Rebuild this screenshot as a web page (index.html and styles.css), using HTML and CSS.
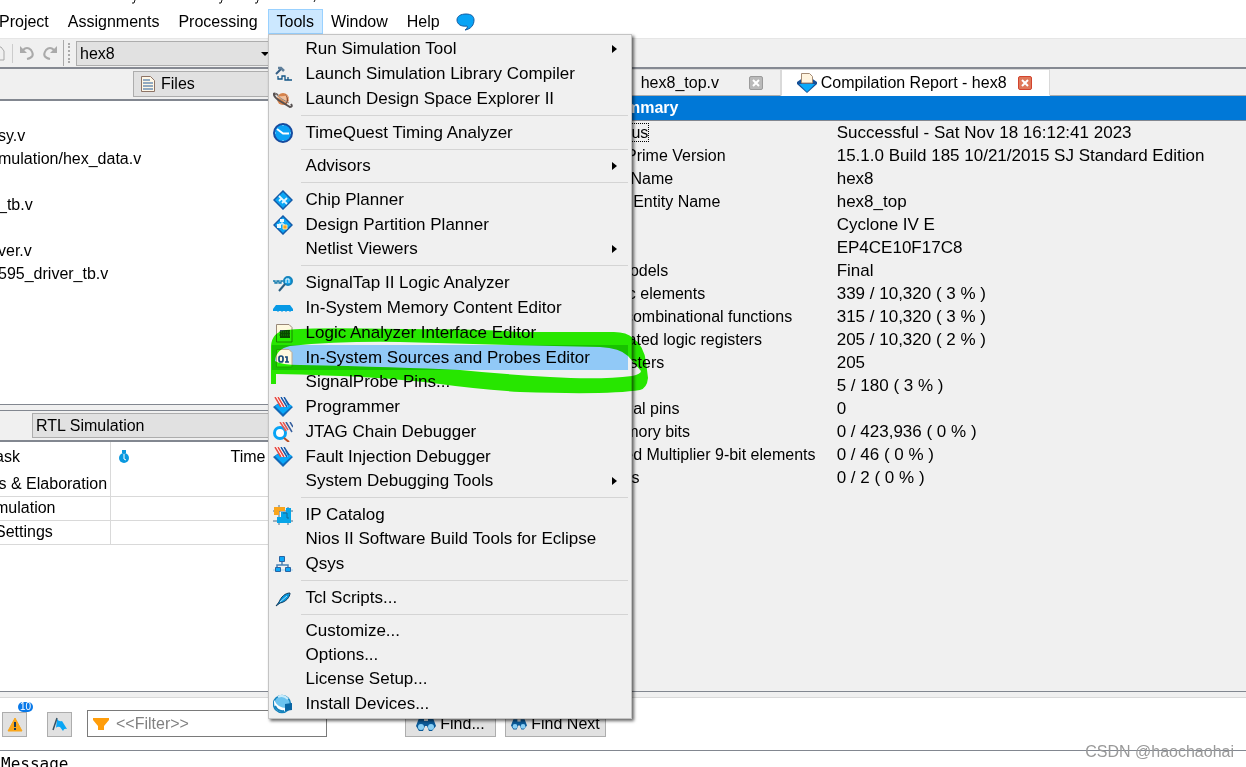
FILE: index.html
```html
<!DOCTYPE html>
<html lang="en">
<head>
    <meta charset="UTF-8">
    <meta name="viewport" content="width=device-width, initial-scale=1.0">
    <title>Quartus Prime - hex8</title>
    <link rel="stylesheet" href="styles.css">
</head>
<body>
    <svg class="title-strip" width="320" height="4" aria-hidden="true">
        <path d="M135 0l-1 3h-2M222 0l-1 3h-2M258 0l-1 3h-2M315 0l-1 2" fill="none" stroke="#111"/>
    </svg>

    <nav class="menubar">
        <button>Project</button>
        <button>Assignments</button>
        <button>Processing</button>
        <div class="menu-holder">
            <button class="open">Tools</button>
            <ul class="dropdown">
                <li><button class="sub">Run Simulation Tool</button></li>
                <li><button class="has-icon"><svg viewBox="0 0 20 20"><path d="M3 10L8 5" fill="none" stroke="#345d83" stroke-width="2"/><path d="M5 4h3l3 3" fill="none" stroke="#5f7f9b" stroke-width="2.500"/><path d="M5 12v3h4v-3h3v4h3v-3h0M12 16h3v-3M15 16h4" fill="none" stroke="#125587" stroke-width="1.300"/></svg>Launch Simulation Library Compiler</button></li>
                <li><button class="has-icon"><svg viewBox="0 0 20 20"><circle cx="10" cy="10" r="6" fill="#d7834b"/><path d="M5 7q5 1 9-1l2 4-3 4q-5-5-9-5z" fill="#f2c09b"/><path d="M12 5q5 4 2 9l-3 2q5-5 1-11" fill="#8b4c31"/><path d="M5 6Q0 3 1 6q1 3 6 6t10 6q3 0 1-3" fill="none" stroke="#575151" stroke-width="2"/><path d="M2 4q5 6 14 10" stroke="#8d8580" fill="none"/></svg>Launch Design Space Explorer II</button></li>
                <li class="line"></li>
                <li><button class="has-icon"><svg viewBox="0 0 20 20"><circle cx="10" cy="10" r="9" fill="#0ba1f5" stroke="#164a9e" stroke-width="2"/><path d="M4 6l6 4.500h6" fill="none" stroke="#fff" stroke-width="2"/><path d="M10 2v1M10 17v1M2 10h1M17 10h1" stroke="#a6e0ff"/></svg>TimeQuest Timing Analyzer</button></li>
                <li class="line"></li>
                <li><button class="sub">Advisors</button></li>
                <li class="line"></li>
                <li><button class="has-icon"><svg viewBox="0 0 20 20"><path d="M10 1l9 9-9 9-9-9z" fill="#0ba6f5" stroke="#145ba9" stroke-width="1.500"/><path d="M6 6l8 8M6 11l3-3M9 13l5-5" stroke="#e3f7ff" stroke-width="1.800"/></svg>Chip Planner</button></li>
                <li><button class="has-icon"><svg viewBox="0 0 20 20"><path d="M10 1l9 9-9 9-9-9z" fill="#0ba6f5" stroke="#145ba9" stroke-width="1.500"/><path d="M9 5v4M6 11V9h5v3" fill="none" stroke="#fff"/><path d="M7 4h4v3H7zM4 9h4v4H4z" fill="#e3f7ff"/><path d="M10 10h4v4h-4z" fill="#fba51a" stroke="#ffe0a0"/></svg>Design Partition Planner</button></li>
                <li><button class="sub">Netlist Viewers</button></li>
                <li class="line"></li>
                <li><button class="has-icon"><svg viewBox="0 0 20 20"><circle cx="15" cy="8" r="4" fill="#14a7ed" stroke="#1684bd" stroke-width="2"/><path d="M13 10V6h3v4" fill="none" stroke="#fff"/><path d="M12 11l-6 7" stroke="#285d80" stroke-width="2"/><path d="M0 8h2v2h2V8h2v2h2V8h2" fill="none" stroke="#147bae" stroke-width="1.300"/></svg>SignalTap II Logic Analyzer</button></li>
                <li><button class="has-icon"><svg viewBox="0 0 20 20"><path d="M3 7h14l3 4v2h-2l-1 1-1-1h-2l-1 1-1-1h-2l-1 1-1-1H6l-1 1-1-1H0v-2z" fill="#0799e5"/></svg>In-System Memory Content Editor</button></li>
                <li><button class="has-icon"><svg viewBox="0 0 20 20"><path d="M3.500 1.500H16l3 3V19H3.500z" fill="#fff9df" stroke="#998879"/><path d="M7 7h10v8H7z" fill="#304c57"/><path d="M6 9h12M6 12h12" stroke="#71918a" stroke-dasharray="1 1"/></svg>Logic Analyzer Interface Editor</button></li>
                <li><button class="has-icon selected"><svg viewBox="0 0 20 20"><path d="M3.500 1.500H16l3 3V19H3.500z" fill="#fff9df" stroke="#c1aa90"/><rect x="6" y="8" width="4" height="6" rx="2" fill="none" stroke="#174a79" stroke-width="1.700"/><path d="M12 9h2v5M12 14h4" fill="none" stroke="#174a79" stroke-width="1.700"/></svg>In-System Sources and Probes Editor</button></li>
                <li><button>SignalProbe Pins...</button></li>
                <li><button class="has-icon"><svg viewBox="0 0 20 20"><path d="M0 10l10-7 10 7-10 10z" fill="#1268b6"/><path d="M2 9l9-6 8 6-9 8z" fill="#08a9fa"/><path d="M2 0l6 10h7L10 0z" fill="#fff"/><path d="M2 0l6 10M5 0l6 10" stroke="#e74b43" stroke-width="1.500"/><path d="M8 0l6 10M11 0l5 8" stroke="#1757a6" stroke-width="1.500"/></svg>Programmer</button></li>
                <li><button class="has-icon"><svg viewBox="0 0 20 20"><circle cx="7" cy="11" r="5.500" fill="#fff" stroke="#08a4f5" stroke-width="3"/><path d="M11 16l5 4" stroke="#bd4f26" stroke-width="2"/><path d="M7 0l6 9M10 0l5 8" stroke="#e55750" stroke-width="1.500"/><path d="M13 0l6 10M17 0l3 5" stroke="#365f9e" stroke-width="1.500"/></svg>JTAG Chain Debugger</button></li>
                <li><button class="has-icon"><svg viewBox="0 0 20 20"><path d="M0 10l10-7 10 7-10 10z" fill="#1268b6"/><path d="M2 9l9-6 8 6-9 8z" fill="#08a9fa"/><path d="M2 0l6 10h7L10 0z" fill="#fff"/><path d="M2 0l6 10M5 0l6 10" stroke="#e74b43" stroke-width="1.500"/><path d="M8 0l6 10M11 0l5 8" stroke="#1757a6" stroke-width="1.500"/></svg>Fault Injection Debugger</button></li>
                <li><button class="sub">System Debugging Tools</button></li>
                <li class="line"></li>
                <li><button class="has-icon"><svg viewBox="0 0 20 20"><path d="M0 6h20M0 16h20M6 0v20M15 2v18" stroke="#446e8c"/><path d="M1 2h11v4H6v4H1z" fill="#f9a51c"/><path d="M8 7h5V3h5v15H4v-6h4z" fill="#07a5e8"/><path d="M10 8h4v5h2" fill="none" stroke="#176794"/></svg>IP Catalog</button></li>
                <li><button>Nios II Software Build Tools for Eclipse</button></li>
                <li><button class="has-icon"><svg viewBox="0 0 20 20"><path d="M9 7v4M4 14v-3h11v3" fill="none" stroke="#4a81b4" stroke-width="1.500"/><path d="M0 16h20" stroke="#9fd4f0"/><path d="M6.500 2.500h5v5h-5zM2.500 13.500h5v4h-5zM12.500 13.500h5v4h-5z" fill="#0ca7f7" stroke="#2863a2"/></svg>Qsys</button></li>
                <li class="line"></li>
                <li><button class="has-icon"><svg viewBox="0 0 20 20"><path d="M3 18l3-4C8 9 12 5 17 5c0 4-4 9-10 10z" fill="#0796dc" stroke="#103d60"/><path d="M7 14l7-6" stroke="#a7e0fb"/></svg>Tcl Scripts...</button></li>
                <li class="line"></li>
                <li><button>Customize...</button></li>
                <li><button>Options...</button></li>
                <li><button>License Setup...</button></li>
                <li><button class="has-icon"><svg viewBox="0 0 20 20"><circle cx="9" cy="10" r="8.500" fill="#6bc3ef" stroke="#1683bd" stroke-width="1.500"/><path d="M1 6q4 8 12 8l-2 4Q1 18 1 8z" fill="#fff"/><path d="M2 12q3 6 9 5" stroke="#1683bd" stroke-width="2" fill="none"/><path d="M5 3q5-3 10 2" stroke="#c6ebfb" stroke-width="2" fill="none"/><path d="M12 10l7-1v7l-7 1z" fill="#0865a4"/></svg>Install Devices...</button></li>
            </ul>
        </div>
        <button>Window</button>
        <button>Help</button>
        <button class="feedback" aria-label="Feedback"><svg width="20" height="20" viewBox="0 0 20 20"><path d="M10 2c5 0 8 2 8 6 0 5-3 9-9 10 2-1 3-3 2-4-6 1-10-2-10-6s4-6 9-6z" fill="#08a3f5" stroke="#145aa0"/></svg></button>
    </nav>

    <div class="toolbar">
        <svg width="64" height="26" viewBox="0 0 64 26" fill="none">
            <path d="M-3 7h4l3 4v9h-6" stroke="#a8a8a8"/>
            <path d="M12.500 4v19" stroke="#ccc"/>
            <path d="M23 10q4-4 8 0 5 7-4 9" stroke="#aaa" stroke-width="2"/><path d="M20 6v7h7z" fill="#aaa"/>
            <path d="M54 10q-4-4-8 0-5 7 4 9" stroke="#aaa" stroke-width="2"/><path d="M57 6v7h-7z" fill="#aaa"/>
            <path d="M63.500 0v26" stroke="#aaa"/>
        </svg>
        <span class="grip"></span>
        <label class="combo"><select aria-label="Project revision"><option>hex8</option></select></label>
    </div>

    <main class="workspace">
        <div class="left">
            <div class="dock-tabs">
                <button><svg width="14" height="16" viewBox="0 0 14 16"><path d="M.5.500h9l4 4v11H.5z" fill="#fff8e8" stroke="#8d7365"/><path d="M2 4h7M2 7h10M2 10h10M2 13h10" stroke="#275d99"/></svg>Files</button>
            </div>
            <ul class="files">
                <li></li>
                <li>sy.v</li>
                <li>mulation/hex_data.v</li>
                <li></li>
                <li>_tb.v</li>
                <li></li>
                <li>ver.v</li>
                <li>595_driver_tb.v</li>
            </ul>
            <div class="flow-bar">
                <select aria-label="Flow"><option>RTL Simulation</option></select>
            </div>
            <div class="tasks">
                <table>
                    <thead>
                        <tr><th class="task">ask</th><th class="time"><div><svg width="12" height="14" viewBox="0 0 12 14"><path d="M4 0h4v3H4z" fill="#0998df"/><circle cx="6" cy="8" r="5" fill="#0998df"/><path d="M6 4v5l2 1" fill="none" stroke="#fff"/></svg>Time</div></th><th></th></tr>
                    </thead>
                    <tbody>
                        <tr><td>is &amp; Elaboration</td><td></td><td></td></tr>
                        <tr><td>mulation</td><td></td><td></td></tr>
                        <tr><td>Settings</td><td></td><td></td></tr>
                    </tbody>
                </table>
            </div>
        </div>

        <div class="right">
            <div class="doc-tabs">
                <div class="doc-tab"><span>hex8_top.v</span><button class="close" aria-label="Close hex8_top.v"><svg viewBox="0 0 8 8"><path d="M1 1l6 6M7 1L1 7"/></svg></button></div>
                <div class="doc-tab active"><svg width="20" height="20" viewBox="0 0 20 20"><path d="M0 9l10-7 10 7v2l-10 9L0 11z" fill="#154f96"/><path d="M2 11h16l-8 8z" fill="#08a9fa"/><path d="M4.500.500h8l3 3V10h-11z" fill="#fff4df" stroke="#a48b75"/></svg><span>Compilation Report - hex8</span><button class="close" aria-label="Close Compilation Report"><svg viewBox="0 0 8 8"><path d="M1 1l6 6M7 1L1 7"/></svg></button></div>
            </div>
            <h2>Flow Summary</h2>
            <table class="report">
                <tr><th><span class="focus">Flow Status</span></th><td>Successful - Sat Nov 18 16:12:41 2023</td></tr>
                <tr><th>Quartus Prime Version</th><td>15.1.0 Build 185 10/21/2015 SJ Standard Edition</td></tr>
                <tr><th>Revision Name</th><td>hex8</td></tr>
                <tr><th>Top-level Entity Name</th><td>hex8_top</td></tr>
                <tr><th>Family</th><td>Cyclone IV E</td></tr>
                <tr><th>Device</th><td>EP4CE10F17C8</td></tr>
                <tr><th>Timing Models</th><td>Final</td></tr>
                <tr><th>Total logic elements</th><td>339 / 10,320 ( 3 % )</td></tr>
                <tr><th class="indent">Total combinational functions</th><td>315 / 10,320 ( 3 % )</td></tr>
                <tr><th class="indent">Dedicated logic registers</th><td>205 / 10,320 ( 2 % )</td></tr>
                <tr><th>Total registers</th><td>205</td></tr>
                <tr><th>Total pins</th><td>5 / 180 ( 3 % )</td></tr>
                <tr><th>Total virtual pins</th><td>0</td></tr>
                <tr><th>Total memory bits</th><td>0 / 423,936 ( 0 % )</td></tr>
                <tr><th>Embedded Multiplier 9-bit elements</th><td>0 / 46 ( 0 % )</td></tr>
                <tr><th>Total PLLs</th><td>0 / 2 ( 0 % )</td></tr>
            </table>
        </div>
    </main>

    <section class="messages">
        <div class="message-tools">
            <button class="square" aria-label="Warnings"><svg width="18" height="18" viewBox="0 0 18 18"><path d="M9 2l7 13H2z" fill="#faa61a" stroke="#faa61a" stroke-linejoin="round"/><path d="M9 6v5M9 12v2" stroke="#15395b" stroke-width="2"/></svg><span class="badge">10</span></button>
            <button class="square" aria-label="Flags"><svg width="18" height="18" viewBox="0 0 18 18"><path d="M6 3q2 3 5 2l5 8q-3-1-4 2l-3-4q-3-1-4 1z" fill="#0aa6f5"/><path d="M6 2L2 14" stroke="#375264" stroke-width="1.500"/></svg></button>
            <label class="filter"><svg width="18" height="14" viewBox="0 0 18 14"><path d="M1 1h16v2l-5 6v4H6V9L1 3z" fill="#ff9d0a"/></svg><input type="text" placeholder="&lt;&lt;Filter&gt;&gt;" aria-label="Filter"></label>
            <button class="find"><svg width="20" height="16" viewBox="0 0 20 16"><path d="M3 2h5v3h4V2h5l3 8-4 5h-3l-2-5H9l-2 5H3l-3-5z" fill="#0b5a98"/><circle cx="5" cy="11" r="3" fill="#8bd0f5"/><circle cx="15" cy="11" r="3" fill="#8bd0f5"/></svg>Find...</button>
            <button class="find next"><svg width="16" height="16" viewBox="0 0 20 16"><path d="M3 2h5v3h4V2h5l3 8-4 5h-3l-2-5H9l-2 5H3l-3-5z" fill="#0b5a98"/><circle cx="5" cy="11" r="3" fill="#8bd0f5"/><circle cx="15" cy="11" r="3" fill="#8bd0f5"/></svg>Find Next</button>
        </div>
        <div class="message-head">Message</div>
    </section>

    <!-- hand-drawn marker around the selected entry -->
    <svg class="marker" width="384" height="72" viewBox="268 324 384 72" aria-hidden="true">
        <path fill-rule="evenodd" fill="#29f500" d="M271 384V346Q272 332 286 330Q310 327 400 329Q480 329 520 332L610 332Q626 331 633 338Q644 346 646 362L648 378Q647 388 640 390Q610 395 520 392Q475 389 440 384Q380 376 276 374V384ZM275 361Q276 349 290 346Q340 341 400 342Q500 345 600 347Q620 348 628 356L641 371Q641 374 632 376Q600 380 550 377Q500 374 460 370Q400 367 300 365Q281 365 275 361Z"/>
    </svg>
    <div class="watermark">CSDN @haochaohai</div>
</body>
</html>
```
FILE: styles.css
```css
* {
    box-sizing: border-box;
}
body {
    margin: 0;
    height: 100vh;
    overflow: hidden;
    display: flex;
    flex-direction: column;
    position: relative;
    background-color: #fff;
    color: #000;
    font-family: "Liberation Sans", Arial, sans-serif;
    font-size: 16px;
}
button, select, input {
    font: inherit;
    color: inherit;
    border-radius: 0;
}
button {
    padding: 0;
    border: none;
    background: none;
}
ul {
    list-style: none;
    margin: 0;
    padding: 0;
}
table {
    border-collapse: collapse;
}
th {
    font-weight: normal;
    text-align: left;
}
.title-strip {
    display: block;
    flex: none;
}

/* menu bar */
.menubar {
    display: flex;
    gap: 1px;
    flex: none;
    height: 34px;
    padding-top: 5px;
    margin-left: -10px;
}
.menubar > button, .open {
    display: flex;
    align-items: center;
    height: 25px;
    padding: 0 8px;
    border: 1px solid transparent;
}
.menubar > .feedback {
    padding: 0 5px;
}
.menu-holder {
    position: relative;
    margin-right: -2px;
}
.menubar .open {
    background-color: #cce8ff;
    border-color: #99d1ff;
}
.dropdown {
    position: absolute;
    z-index: 2;
    top: 25px;
    left: 0;
    width: 364px;
    padding: 2px 3px;
    background-color: #f0f0f0;
    border: 1px solid #c4c4c4;
    box-shadow: 2px 2px 3px rgba(0,0,0,0.6);
    font-size: 17px;
}
.dropdown button {
    display: flex;
    align-items: center;
    width: 100%;
    height: 24px;
    padding-left: 34px;
    text-align: left;
    white-space: nowrap;
}
.dropdown .has-icon {
    height: 25px;
    padding-left: 1px;
    gap: 13px;
}
.dropdown svg {
    width: 20px;
    height: 20px;
    flex: none;
}
.dropdown .selected {
    background-color: #91c9f7;
}
.dropdown .sub::after {
    content: "";
    margin-left: auto;
    margin-right: 11px;
    border: 4px solid transparent;
    border-left: 5px solid #000;
    border-right: 0;
}
.line {
    height: 1px;
    margin: 4px 0 4px 29px;
    background-color: #d4d4d4;
}

/* toolbar */
.toolbar {
    display: flex;
    align-items: center;
    flex: none;
    height: 31px;
    background-color: #f0f0f0;
    border-top: 1px solid #e6e6e6;
    border-bottom: 2px solid #858992;
}
.grip {
    width: 2px;
    height: 20px;
    margin: 0 6px 0 4px;
    border-left: 2px dotted #aaa;
}
select {
    appearance: none;
    height: 25px;
    padding: 0 3px;
    background-color: #e1e1e1;
    border: 1px solid #adadad;
}
.combo {
    position: relative;
    width: 201px;
}
.combo select {
    width: 100%;
}
.combo::after {
    content: "";
    position: absolute;
    right: 8px;
    top: 11px;
    border: 4px solid transparent;
    border-top-color: #000;
    border-bottom: 0;
}

/* docks */
.workspace {
    display: grid;
    grid-template-columns: 45% 1fr;
    flex: 1;
    min-height: 0;
    border-bottom: 1px solid #828790;
}
.left {
    display: flex;
    flex-direction: column;
    min-width: 0;
}
.dock-tabs {
    display: flex;
    padding: 2px 0 2px 133px;
    background-color: #f0f0f0;
    border-bottom: 2px solid #828790;
}
.dock-tabs button {
    display: flex;
    align-items: center;
    gap: 6px;
    width: 240px;
    height: 26px;
    padding-left: 7px;
    background-color: #e1e1e1;
    border: 1px solid #adadad;
}
.files {
    flex: 1;
    margin-left: -2px;
}
.files li {
    height: 23px;
    line-height: 23px;
}
.flow-bar {
    flex: none;
    height: 38px;
    padding: 9px 0 0 32px;
    background: linear-gradient(#828790 1px, #f0f0f0 1px 6px, #828790 6px 7px, #f0f0f0 7px);
    border-bottom: 2px solid #828790;
}
.flow-bar select {
    display: block;
    width: 340px;
}
.tasks {
    height: 249px;
}
.tasks table {
    width: 100%;
    table-layout: fixed;
}
.tasks th, .tasks td {
    height: 24px;
    padding: 0;
    border-right: 1px solid #d9d9d9;
    border-bottom: 1px solid #d9d9d9;
    white-space: nowrap;
}
.tasks td:first-child, .task {
    text-indent: -5px;
}
.tasks th {
    height: 30px;
    border-bottom: none;
}
.tasks .task {
    width: 110px;
}
.time {
    width: 160px;
}
.time div {
    display: flex;
    align-items: center;
    justify-content: space-between;
    padding: 0 4px 0 7px;
}

/* report */
.right {
    display: flex;
    flex-direction: column;
    min-width: 0;
    background-color: #f0f0f0;
}
.doc-tabs {
    display: flex;
    height: 27px;
    border-bottom: 1px solid #adadad;
}
.doc-tab {
    display: flex;
    align-items: center;
    gap: 4px;
    height: 27px;
    width: 220px;
    padding: 0 17px 0 79px;
    border: 1px solid #d9d9d9;
    border-bottom-color: #adadad;
}
.doc-tab.active {
    width: 269px;
    padding: 0 17px 0 15px;
    background-color: #fff;
    border-bottom-color: #fff;
}
.close {
    width: 14px;
    height: 14px;
    margin-left: auto;
    padding: 2px;
    background-color: #bababa;
    border: 1px solid #9b9b9b;
    border-radius: 2px;
}
.active .close {
    background-color: #df785a;
    border-color: #d2442e;
}
.close svg {
    display: block;
    fill: none;
    stroke: #fff;
    stroke-width: 2;
}
h2 {
    margin: 0;
    padding-left: 4px;
    background-color: #0078d7;
    color: #fff;
    font-size: 16px;
    line-height: 23px;
    border-bottom: 1px solid #0078d7;
}
.report {
    width: 100%;
    table-layout: fixed;
    border-top: 1px solid #828790;
}
.report th, .report td {
    height: 23px;
    padding: 0;
    line-height: 23px;
    white-space: nowrap;
}
.report td {
    font-size: 17px;
}
.report th {
    width: 276px;
    padding-left: 4px;
}
.report .indent {
    padding-left: 26px;
}
.focus {
    outline: 1px dotted #000;
}

/* messages */
.messages {
    flex: none;
    height: 75px;
    border-top: 5px solid #f0f0f0;
}
.message-tools {
    display: flex;
    height: 54px;
    padding: 14px 0 0 2px;
    border-top: 1px solid #d9d9d9;
    border-bottom: 1px solid #828790;
}
.square {
    position: relative;
    display: flex;
    align-items: center;
    justify-content: center;
    width: 25px;
    height: 25px;
    margin-right: 20px;
    background-color: #e1e1e1;
    border: 1px solid #adadad;
}
.square + .filter {
    margin-left: -5px;
}
.badge {
    position: absolute;
    top: -11px;
    left: 15px;
    width: 15px;
    border-radius: 5px;
    background-color: #0878e8;
    color: #fff;
    font-size: 10px;
    line-height: 10px;
}
.filter {
    display: flex;
    align-items: center;
    width: 240px;
    height: 27px;
    margin-top: -2px;
    margin-right: 78px;
    padding-left: 4px;
    gap: 6px;
    border: 1px solid #7a7a7a;
}
.filter input {
    flex: 1;
    min-width: 0;
    padding: 0;
    border: none;
    outline: none;
}
.filter input::placeholder {
    color: #808080;
}
.find {
    display: flex;
    align-items: center;
    justify-content: center;
    gap: 4px;
    width: 91px;
    height: 27px;
    margin-top: -2px;
    margin-right: 9px;
    background-color: #e1e1e1;
    border: 1px solid #adadad;
}
.next {
    width: 101px;
}
.message-head {
    padding: 3px 0 0 1px;
    font-family: "DejaVu Sans Mono", monospace;
}

/* overlays */
.marker {
    position: absolute;
    z-index: 3;
    top: 324px;
    left: 268px;
    mix-blend-mode: multiply;
    pointer-events: none;
}
.watermark {
    position: absolute;
    right: 12px;
    bottom: 6px;
    color: #999;
    font-size: 16px;
}
```
